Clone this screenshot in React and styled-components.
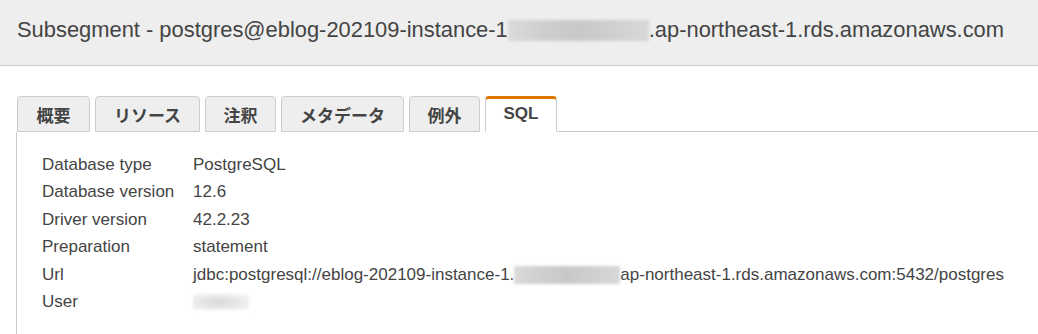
import React from 'react';
import styled, { createGlobalStyle } from 'styled-components';

const GlobalStyle = createGlobalStyle`
  html, body {
    margin: 0;
    padding: 0;
    background: #fff;
    font-family: "Liberation Sans", Arial, "Noto Sans CJK JP", sans-serif;
  }
`;

const tabs = [
  { name: '概要', w: 73 },
  { name: 'リソース', w: 105 },
  { name: '注釈', w: 71 },
  { name: 'メタデータ', w: 123 },
  { name: '例外', w: 71 },
  { name: 'SQL', w: 72, active: true },
];

const rows = [
  { label: 'Database type', value: 'PostgreSQL' },
  { label: 'Database version', value: '12.6' },
  { label: 'Driver version', value: '42.2.23' },
  { label: 'Preparation', value: 'statement' },
  { label: 'Url', value: 'url' },
  { label: 'User', value: 'user' },
];

function App() {
  return (
    <Page>
      <GlobalStyle />
      <Header>
        <Title>
          Subsegment - postgres@eblog-202109-instance-1
          <Blur $w={141} $h={21} />
          .ap-northeast-1.rds.amazonaws.com
        </Title>
      </Header>
      <Body>
        <TabBar>
          {tabs.map((t) => (
            <Tab key={t.name} $w={t.w} $active={t.active}>{t.name}</Tab>
          ))}
          <TabFill />
        </TabBar>
        <Panel>
          <Table>
            {rows.map((r) => (
              <React.Fragment key={r.label}>
                <Label>{r.label}</Label>
                <Value>
                  {r.value === 'url' && (
                    <>
                      jdbc:postgresql://eblog-202109-instance-1.
                      <Blur $w={106} $h={18} />
                      ap-northeast-1.rds.amazonaws.com:5432/postgres
                    </>
                  )}
                  {r.value === 'user' && <Blur $w={56} $h={16} $soft />}
                  {r.value !== 'url' && r.value !== 'user' && r.value}
                </Value>
              </React.Fragment>
            ))}
          </Table>
        </Panel>
      </Body>
    </Page>
  );
}

const Page = styled.div`
  width: 1038px;
  height: 334px;
  overflow: hidden;
  background: #fff;
`;

const Header = styled.div`
  height: 66px;
  box-sizing: border-box;
  background: #eeeeee;
  border-bottom: 1px solid #cccccc;
  display: flex;
  align-items: center;
  padding: 0 17px;
`;

const Title = styled.h1`
  margin: -5px 0 0 0;
  font-size: 21.9px;
  font-weight: normal;
  color: #444;
  white-space: nowrap;
  display: flex;
  align-items: center;
`;

const Blur = styled.span`
  display: inline-block;
  flex: none;
  width: ${(p) => p.$w}px;
  height: ${(p) => p.$h}px;
  background: ${(p) =>
    p.$soft
      ? 'radial-gradient(ellipse at 45% 50%, #d6d6d6 0%, #ececec 60%, #f8f8f8 100%)'
      : 'linear-gradient(90deg, #dadada 0%, #cfcfcf 25%, #c8c8c8 50%, #d0d0d0 75%, #d8d8d8 100%)'};
  filter: blur(1.5px);
`;

const Body = styled.div`
  padding: 30px 0 0 16px;
`;

const TabBar = styled.div`
  display: flex;
  align-items: flex-end;
  gap: 5px;
  height: 36px;
  padding-left: 1px;
`;

const Tab = styled.div`
  flex: none;
  width: ${(p) => p.$w}px;
  height: 36px;
  box-sizing: border-box;
  display: flex;
  align-items: center;
  justify-content: center;
  font-size: 17px;
  font-weight: bold;
  color: #444;
  background: ${(p) => (p.$active ? '#fff' : '#eeeeee')};
  border: 1px solid #cccccc;
  border-top: ${(p) => (p.$active ? '3px solid #e07800' : '1px solid #cccccc')};
  border-bottom: ${(p) => (p.$active ? '1px solid #fff' : '1px solid #cccccc')};
  border-radius: 4px 4px 0 0;
  padding-bottom: ${(p) => (p.$active ? '2px' : '0')};
`;

const TabFill = styled.div`
  flex: 1;
  border-bottom: 1px solid #cccccc;
  margin-left: -5px;
`;

const Panel = styled.div`
  border-left: 1px solid #cccccc;
  height: 240px;
  padding: 19px 0 0 25px;
  box-sizing: border-box;
`;

const Table = styled.div`
  display: grid;
  grid-template-columns: 151px auto;
  grid-auto-rows: 27.5px;
  align-items: center;
  font-size: 17px;
  color: #444;
`;

const Label = styled.div`
  white-space: nowrap;
`;

const Value = styled.div`
  white-space: nowrap;
  display: flex;
  align-items: center;
`;

export default App;
